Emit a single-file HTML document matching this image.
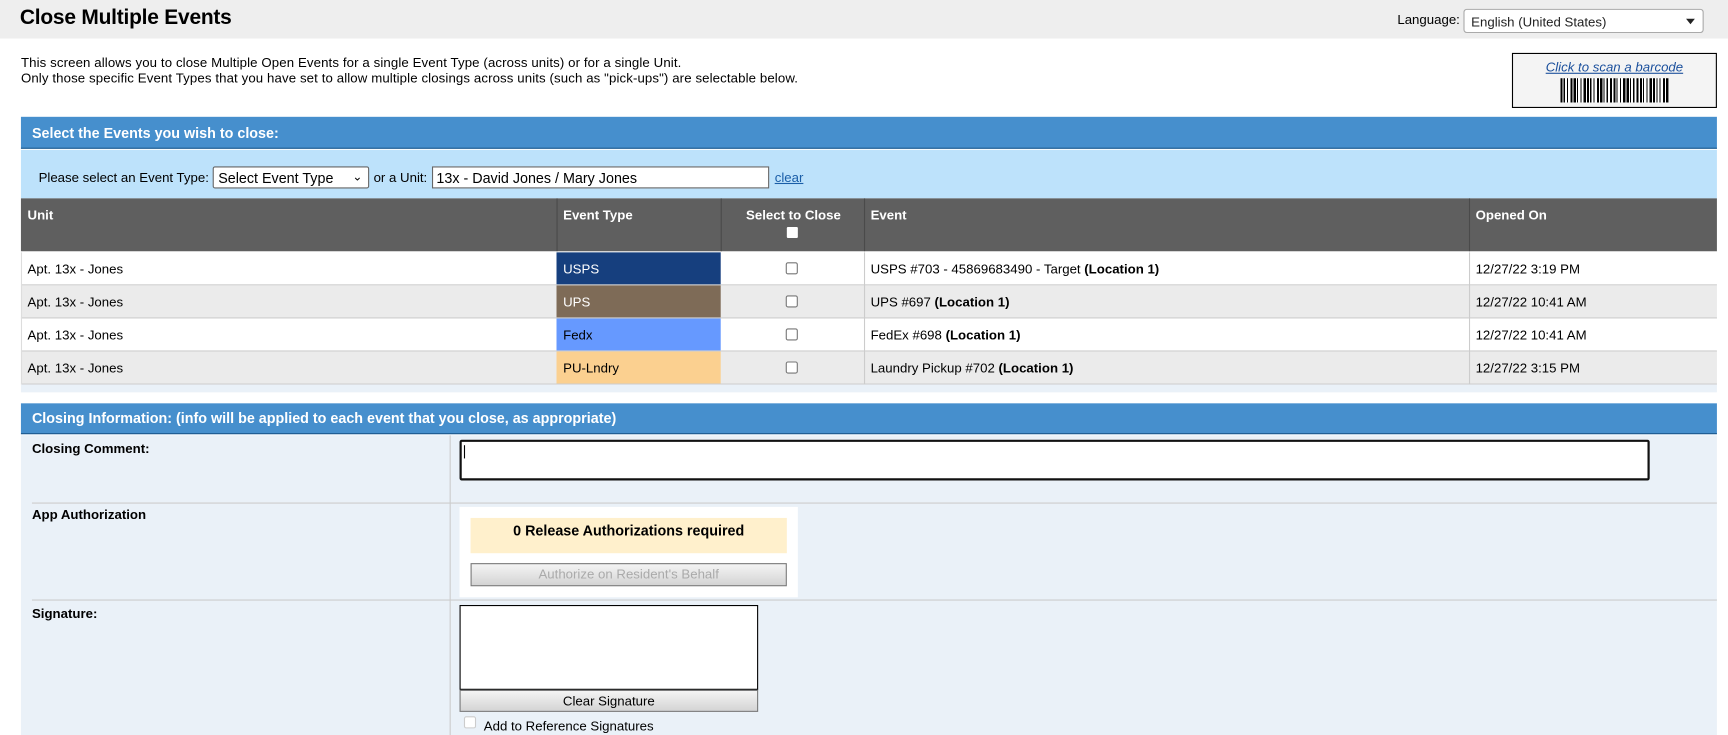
<!DOCTYPE html>
<html><head><meta charset="utf-8"><style>
html,body{margin:0;padding:0;width:1728px;height:735px;overflow:hidden;background:#fff;font-family:"Liberation Sans",Arial,sans-serif;color:#000}
#w{position:absolute;left:0;top:0;width:1568px;height:667px;transform:scale(1.102);transform-origin:0 0}
.a{position:absolute}
.top{left:0;top:0;width:1568px;height:35px;background:#eeeeee}
.t{font-size:12px}
.hdr{background:#468fcd;color:#fff;font-weight:bold;font-size:13px;border-bottom:1px solid #1d5a8f}
.cb{position:absolute;width:11px;height:11px;border:1px solid #767676;border-radius:2px;background:#fff;box-sizing:border-box}
.btn{position:absolute;box-sizing:border-box;border:1px solid #777;background:linear-gradient(#f4f4f4,#d4d4d4);font-size:12px;text-align:center}
</style></head><body><div id="w">
<div class="a top"></div>
<div class="a" style="left:18px;top:6px;font-size:19px;font-weight:bold;letter-spacing:-0.2px">Close Multiple Events</div>
<div class="a t" style="left:1268px;top:11px">Language:</div>
<div class="a" style="left:1328px;top:8px;width:218px;height:22px;box-sizing:border-box;border:1px solid #aaa;border-radius:3px;background:#fff;font-size:12px;padding:4px 6px;color:#222">English (United States)<span style="position:absolute;right:7px;top:8px;border-left:4px solid transparent;border-right:4px solid transparent;border-top:5px solid #222"></span></div>
<div class="a t" style="left:19px;top:50px;line-height:14px;font-size:12px;letter-spacing:0.1px">This screen allows you to close Multiple Open Events for a single Event Type (across units) or for a single Unit.<br>Only those specific Event Types that you have set to allow multiple closings across units (such as "pick-ups") are selectable below.</div>
<div class="a" style="left:1372px;top:48px;width:186px;height:50px;box-sizing:border-box;border:1px solid #000;background:#f4f4f4">
<div style="text-align:center;font-size:12px;font-style:italic;color:#1a4f9c;text-decoration:underline;margin-top:5px">Click to scan a barcode</div>
<div style="margin:3px auto 0;width:98px;height:22px;background:repeating-linear-gradient(90deg,#000 0 2px,#fff 2px 3px,#000 3px 4px,#fff 4px 6px,#000 6px 7px,#fff 7px 9px,#000 9px 11px,#fff 11px 12px)"></div></div>

<div class="a hdr" style="left:19px;top:106px;width:1539px;height:29px;line-height:29px;padding-left:10px;box-sizing:border-box">Select the Events you wish to close:</div>
<div class="a" style="left:19px;top:136px;width:1539px;height:44px;background:#bde2fb"></div>
<div class="a t" style="left:35px;top:154px">Please select an Event Type:</div>
<div class="a" style="left:193px;top:151px;width:142px;height:20px;box-sizing:border-box;border:1px solid #666;border-radius:2px;background:#fff;font-size:13px;padding:2px 4px">Select Event Type<span style="position:absolute;right:5px;top:2px;font-size:11px">&#8964;</span></div>
<div class="a t" style="left:339px;top:154px">or a Unit:</div>
<div class="a" style="left:392px;top:151px;width:306px;height:20px;box-sizing:border-box;border:1px solid #666;background:#fff;font-size:13px;padding:2px 3px">13x - David Jones / Mary Jones</div>
<div class="a t" style="left:703px;top:154px;color:#1a5ea8;text-decoration:underline">clear</div>

<div class="a" style="left:19px;top:180px;width:1539px;height:48px;background:#5f5f5f;color:#fff;font-weight:bold;font-size:12px">
<div class="a" style="left:6px;top:8px">Unit</div>
<div class="a" style="left:486px;top:0;width:1px;height:48px;background:#4a4a4a"></div>
<div class="a" style="left:492px;top:8px">Event Type</div>
<div class="a" style="left:635px;top:0;width:1px;height:48px;background:#4a4a4a"></div>
<div class="a" style="left:636px;top:8px;width:130px;text-align:center">Select to Close</div>
<div class="a" style="left:695px;top:26px;width:10px;height:10px;background:#fff;border-radius:1px"></div>
<div class="a" style="left:765px;top:0;width:1px;height:48px;background:#4a4a4a"></div>
<div class="a" style="left:771px;top:8px">Event</div>
<div class="a" style="left:1314px;top:0;width:1px;height:48px;background:#4a4a4a"></div>
<div class="a" style="left:1320px;top:8px">Opened On</div>
</div>

<div class="a" style="left:19px;top:229px;width:1539px;height:120px;font-size:12px">
<div class="a" style="left:0;top:0;width:1539px;height:29px;background:#fff;border-bottom:1px solid #ccc"></div>
<div class="a" style="left:0;top:30px;width:1539px;height:29px;background:#ebebeb;border-bottom:1px solid #ccc"></div>
<div class="a" style="left:0;top:60px;width:1539px;height:29px;background:#fff;border-bottom:1px solid #ccc"></div>
<div class="a" style="left:0;top:90px;width:1539px;height:29px;background:#ebebeb;border-bottom:1px solid #ccc"></div>
<div class="a" style="left:0;top:0;width:1px;height:120px;background:#ddd"></div>
<div class="a" style="left:765px;top:0;width:1px;height:120px;background:#ccc"></div>
<div class="a" style="left:1314px;top:0;width:1px;height:120px;background:#ccc"></div>
<div class="a" style="left:486px;top:0;width:149px;height:29px;background:#163f7e"></div>
<div class="a" style="left:486px;top:30px;width:149px;height:29px;background:#7e6b57"></div>
<div class="a" style="left:486px;top:60px;width:149px;height:29px;background:#6699ff"></div>
<div class="a" style="left:486px;top:90px;width:149px;height:29px;background:#fbd090"></div>
<div class="a" style="left:6px;top:8px">Apt. 13x - Jones</div>
<div class="a" style="left:6px;top:38px">Apt. 13x - Jones</div>
<div class="a" style="left:6px;top:68px">Apt. 13x - Jones</div>
<div class="a" style="left:6px;top:98px">Apt. 13x - Jones</div>
<div class="a" style="left:492px;top:8px;color:#fff">USPS</div>
<div class="a" style="left:492px;top:38px;color:#fff">UPS</div>
<div class="a" style="left:492px;top:68px;color:#000">Fedx</div>
<div class="a" style="left:492px;top:98px;color:#000">PU-Lndry</div>
<div class="cb" style="left:694px;top:9px"></div>
<div class="cb" style="left:694px;top:39px"></div>
<div class="cb" style="left:694px;top:69px"></div>
<div class="cb" style="left:694px;top:99px"></div>
<div class="a" style="left:771px;top:8px">USPS #703 - 45869683490 - Target <b>(Location 1)</b></div>
<div class="a" style="left:771px;top:38px">UPS #697 <b>(Location 1)</b></div>
<div class="a" style="left:771px;top:68px">FedEx #698 <b>(Location 1)</b></div>
<div class="a" style="left:771px;top:98px">Laundry Pickup #702 <b>(Location 1)</b></div>
<div class="a" style="left:1320px;top:8px">12/27/22 3:19 PM</div>
<div class="a" style="left:1320px;top:38px">12/27/22 10:41 AM</div>
<div class="a" style="left:1320px;top:68px">12/27/22 10:41 AM</div>
<div class="a" style="left:1320px;top:98px">12/27/22 3:15 PM</div>
</div>
<div class="a" style="left:19px;top:349px;width:1539px;height:7px;background:#eaf1f8"></div>

<div class="a hdr" style="left:19px;top:366px;width:1539px;height:28px;line-height:28px;padding-left:10px;box-sizing:border-box">Closing Information: (info will be applied to each event that you close, as appropriate)</div>
<div class="a" style="left:19px;top:395px;width:1539px;height:272px;background:#eaf1f8"></div>
<div class="a" style="left:408px;top:395px;width:1px;height:272px;background:#ccc"></div>
<div class="a" style="left:29px;top:456px;width:1529px;height:1px;background:#ccc"></div>
<div class="a" style="left:29px;top:544px;width:1529px;height:1px;background:#ccc"></div>
<div class="a t" style="left:29px;top:400px;font-weight:bold">Closing Comment:</div>
<div class="a" style="left:417px;top:399px;width:1080px;height:37px;box-sizing:border-box;border:2px solid #111;border-radius:2px;background:#fff"><div style="position:absolute;left:2px;top:3px;width:1px;height:12px;background:#000"></div></div>
<div class="a t" style="left:29px;top:460px;font-weight:bold">App Authorization</div>
<div class="a" style="left:417px;top:460px;width:307px;height:82px;background:#fff"></div>
<div class="a" style="left:427px;top:470px;width:287px;height:32px;background:#fff0cc;text-align:center;font-weight:bold;font-size:13px;line-height:24px">0 Release Authorizations required</div>
<div class="btn" style="left:427px;top:511px;width:287px;height:21px;line-height:19px;color:#aaa">Authorize on Resident's Behalf</div>
<div class="a t" style="left:29px;top:550px;font-weight:bold">Signature:</div>
<div class="a" style="left:417px;top:549px;width:271px;height:77px;box-sizing:border-box;border:1px solid #000;background:#fff"></div>
<div class="btn" style="left:417px;top:626px;width:271px;height:20px;line-height:18px">Clear Signature</div>
<div class="cb" style="left:421px;top:650px;border-color:#ccc"></div>
<div class="a t" style="left:439px;top:652px">Add to Reference Signatures</div>
</div></body></html>
